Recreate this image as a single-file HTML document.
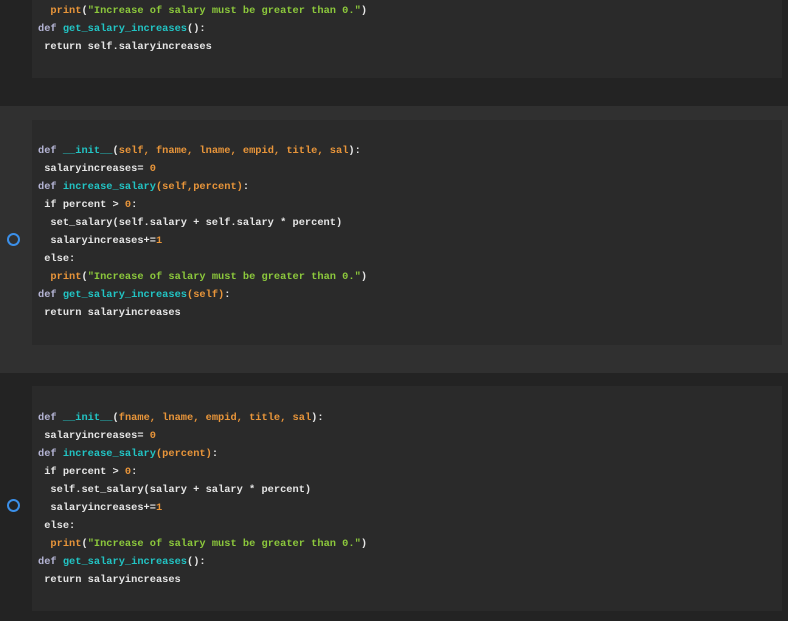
<!DOCTYPE html>
<html><head><meta charset="utf-8"><style>
html,body{margin:0;padding:0;width:788px;height:621px;overflow:hidden;background:#232323}
.band{position:absolute;left:0;top:106px;width:788px;height:267px;background:#303030}
.card{position:absolute;left:32px;width:750px;background:#2a2a2a}
.l{position:absolute;left:38px;white-space:pre;font-family:"Liberation Mono",monospace;font-weight:bold;font-size:10.35px;line-height:18px;color:#e6e6e6}
.k{color:#b4b4d4}.f{color:#22c4c4}.p{color:#e8953a}.s{color:#8cc83c}.n{color:#e8953a}
.c{position:absolute;left:7px;width:9px;height:9px;border:2px solid #3b8fe8;border-radius:50%}
</style></head><body>
<div class="card" style="top:0;height:78px"></div>
<div class="band"></div>
<div class="card" style="top:120px;height:225px"></div>
<div class="card" style="top:386px;height:225px"></div>

<div class="l" style="top:2px">  <span class="p">print</span>(<span class="s">"Increase of salary must be greater than 0."</span>)</div>
<div class="l" style="top:20px"><span class="k">def</span> <span class="f">get_salary_increases</span>():</div>
<div class="l" style="top:38px"> return self.salaryincreases</div>

<div class="l" style="top:142px"><span class="k">def</span> <span class="f">__init__</span>(<span class="p">self, fname, lname, empid, title, sal</span>):</div>
<div class="l" style="top:160px"> salaryincreases= <span class="n">0</span></div>
<div class="l" style="top:178px"><span class="k">def</span> <span class="f">increase_salary</span><span class="p">(self,percent)</span>:</div>
<div class="l" style="top:196px"> if percent &gt; <span class="n">0</span>:</div>
<div class="l" style="top:214px">  set_salary(self.salary + self.salary * percent)</div>
<div class="l" style="top:232px">  salaryincreases+=<span class="n">1</span></div>
<div class="l" style="top:250px"> else:</div>
<div class="l" style="top:268px">  <span class="p">print</span>(<span class="s">"Increase of salary must be greater than 0."</span>)</div>
<div class="l" style="top:286px"><span class="k">def</span> <span class="f">get_salary_increases</span><span class="p">(self)</span>:</div>
<div class="l" style="top:304px"> return salaryincreases</div>
<div class="c" style="top:233px"></div>

<div class="l" style="top:409px"><span class="k">def</span> <span class="f">__init__</span>(<span class="p">fname, lname, empid, title, sal</span>):</div>
<div class="l" style="top:427px"> salaryincreases= <span class="n">0</span></div>
<div class="l" style="top:445px"><span class="k">def</span> <span class="f">increase_salary</span><span class="p">(percent)</span>:</div>
<div class="l" style="top:463px"> if percent &gt; <span class="n">0</span>:</div>
<div class="l" style="top:481px">  self.set_salary(salary + salary * percent)</div>
<div class="l" style="top:499px">  salaryincreases+=<span class="n">1</span></div>
<div class="l" style="top:517px"> else:</div>
<div class="l" style="top:535px">  <span class="p">print</span>(<span class="s">"Increase of salary must be greater than 0."</span>)</div>
<div class="l" style="top:553px"><span class="k">def</span> <span class="f">get_salary_increases</span>():</div>
<div class="l" style="top:571px"> return salaryincreases</div>
<div class="c" style="top:499px"></div>
</body></html>
